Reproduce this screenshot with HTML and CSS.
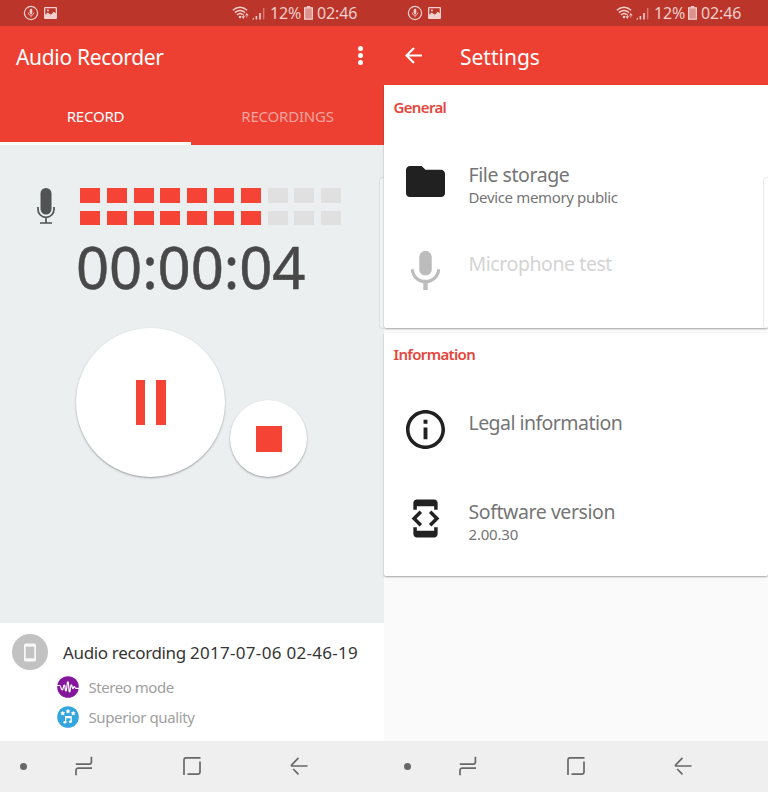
FILE: index.html
```
<!DOCTYPE html>
<html lang="en">

<head>
  <meta charset="UTF-8">
  <meta name="viewport" content="width=device-width, initial-scale=1.0">
  <title>Audio Recorder</title>
  <link rel="stylesheet" href="styles.css">
</head>

<body>
  <!-- shared icons -->
  <svg class="sprite">
    <symbol id="rec" viewBox="0 0 16 16">
      <circle cx="8" cy="8" r="6.6" fill="none" stroke="currentColor" stroke-width="1.2"/>
      <rect x="6.7" y="3.8" width="2.6" height="5.2" rx="1.3" fill="currentColor"/>
      <path d="M5.2 7.5a2.8 2.8 0 0 0 5.6 0M8 10.3v2" fill="none" stroke="currentColor" stroke-width=".8"/>
    </symbol>
    <symbol id="pic" viewBox="0 0 13 12">
      <path fill="currentColor" fill-rule="evenodd" d="M1 0h11a1 1 0 0 1 1 1v10a1 1 0 0 1-1 1H1a1 1 0 0 1-1-1V1a1 1 0 0 1 1-1zM1.3 1.3v6.5l2.5-2.3 3 2.2 3-3 1.9 1.6V1.3zM3 2.5h1.8v1.7H3z"/>
    </symbol>
    <symbol id="wifi" viewBox="0 0 17 14">
      <g fill="none" stroke="currentColor" stroke-width="1.4">
        <path d="M.8 4.2Q8 -1.8 15.2 4.2M2.9 6.6Q8 2.2 13.1 6.6M5 8.9Q8 6.4 10.6 8.6"/>
      </g>
      <circle cx="8" cy="11" r="1.3" fill="currentColor"/>
      <path d="M9.5 10.3h3.6L11.3 13zM11 8h.8v3H11zM13 9.4h3.6L14.8 7zM14.4 9h.8v2.5h-.8z" fill="currentColor"/>
    </symbol>
    <symbol id="signal" viewBox="0 0 13 13">
      <path d="M0 12.5l2-2v2zM3.6 9h1.6v3.5H3.6zM7.2 6h1.6v6.5H7.2z" fill="currentColor"/>
      <path d="M10.9 1h1.5v11.5h-1.5z" fill="currentColor" opacity=".45"/>
    </symbol>
    <symbol id="battery" viewBox="0 0 9 14">
      <path d="M2.8 0h3.4v1.5H2.8z" fill="currentColor"/>
      <rect x=".6" y="1.8" width="7.8" height="11.4" fill="currentColor" fill-opacity=".6" stroke="currentColor" stroke-width="1.2"/>
    </symbol>
    <symbol id="recents" viewBox="0 0 18 20">
      <path d="M.8 8.2h13.4q2.2 0 2.2-2.2V.8M17 12.2H3.2Q1 12.2 1 14.4v4.8" fill="none" stroke="currentColor" stroke-width="1.7"/>
    </symbol>
    <symbol id="home" viewBox="0 0 18 18">
      <path d="M1 18V3q0-2.2 2.2-2.2H17.5M17 4.5V15q0 2.2-2.2 2.2H4.5" fill="none" stroke="currentColor" stroke-width="1.7"/>
    </symbol>
    <symbol id="back" viewBox="0 0 18 18">
      <path d="M17.5 9H2.5Q.6 9 2 7.6L8.5.8M3.2 12l5.3 5.4" fill="none" stroke="currentColor" stroke-width="1.7"/>
    </symbol>
  </svg>

  <div class="phone">
    <div class="status">
      <svg class="s-rec"><use href="#rec"/></svg>
      <svg class="s-pic"><use href="#pic"/></svg>
      <div class="status-right">
        <svg class="s-wifi"><use href="#wifi"/></svg>
        <svg class="s-signal"><use href="#signal"/></svg>
        <span class="percent">12%</span>
        <svg class="s-battery"><use href="#battery"/></svg>
        <span class="clock">02:46</span>
      </div>
    </div>
    <header class="appbar">
      <h1 class="app-title">Audio Recorder</h1>
      <div class="menu"><i></i><i></i><i></i></div>
    </header>
    <nav class="tabs">
      <a class="tab active">RECORD</a>
      <a class="tab">RECORDINGS</a>
    </nav>

    <main class="recorder">
      <div class="level">
        <svg class="level-mic" viewBox="0 0 18 36">
          <rect x="3.5" y="0" width="11" height="26.5" rx="5.5" fill="#515253"/>
          <path d="M1 19v2.5a8 7.8 0 0 0 16 0V19M9 29v5.5M3 35h12" fill="none" stroke="#515253" stroke-width="1.7"/>
        </svg>
        <div class="meter">
          <b></b><b></b><b></b><b></b><b></b><b></b><b></b><b class="off"></b><b class="off"></b><b class="off"></b>
          <b></b><b></b><b></b><b></b><b></b><b></b><b></b><b class="off"></b><b class="off"></b><b class="off"></b>
        </div>
      </div>
      <div class="timer">00:00:04</div>
      <div class="controls">
        <button class="round pause"><i></i><i></i></button>
        <button class="round stop"><i></i></button>
      </div>
    </main>

    <section class="details">
      <svg class="device" viewBox="0 0 36 36">
        <circle cx="18" cy="18" r="18" fill="#c2c2c2"/>
        <rect x="12" y="9.5" width="12" height="18" rx="1.5" fill="#f8f8f8"/>
        <rect x="13.7" y="12.7" width="8.6" height="11.6" fill="#c2c2c2"/>
      </svg>
      <div class="details-text">
        <p class="name">Audio recording <span class="date">2017-07-06 02-46-19</span></p>
        <div class="option">
          <svg viewBox="0 0 22 22">
            <circle cx="11" cy="11" r="10.8" fill="#86169c"/>
            <path d="M0 9.5h2.5q1 0 1.3 1.5t1 2.6q.8.8 1.2-1l.8-3q.5-1 1 0l.7 5q.5 1 .9-.2l1-8q.5-1 1 0l.7 9q.4 1 .9 0l.9-6q.4-1 .9 0l.9 3q.6.5.9-1 .8-1.5 1.4 0 .5 1 1.4 1H22" fill="none" stroke="#fff" stroke-width="1.2"/>
          </svg>
          <span>Stereo mode</span>
        </div>
        <div class="option quality">
          <svg viewBox="0 0 22 22">
            <circle cx="11" cy="11" r="10.8" fill="#35a5df"/>
            <g fill="#fff">
              <path id="star" d="M11 2.8l.8 1.5 1.6.3-1.1 1.2.2 1.7-1.5-.7-1.5.7.2-1.7-1.1-1.2 1.6-.3z"/>
              <use href="#star" x="-5.2" y="2"/>
              <use href="#star" x="5.2" y="2"/>
              <path d="M8 10h6.8v5.5h-1.3v-3.3H9.3v4H8z"/>
              <ellipse cx="7.9" cy="16.2" rx="1.5" ry="1.2"/>
              <ellipse cx="13.4" cy="15.7" rx="1.5" ry="1.2"/>
            </g>
          </svg>
          <span>Superior quality</span>
        </div>
      </div>
    </section>

    <footer class="navbar">
      <i class="dot"></i>
      <svg class="n-recents"><use href="#recents"/></svg>
      <svg class="n-home"><use href="#home"/></svg>
      <svg class="n-back"><use href="#back"/></svg>
    </footer>
    <div class="edge"></div>
  </div>

  <div class="phone settings">
    <div class="status">
      <svg class="s-rec"><use href="#rec"/></svg>
      <svg class="s-pic"><use href="#pic"/></svg>
      <div class="status-right">
        <svg class="s-wifi"><use href="#wifi"/></svg>
        <svg class="s-signal"><use href="#signal"/></svg>
        <span class="percent">12%</span>
        <svg class="s-battery"><use href="#battery"/></svg>
        <span class="clock">02:46</span>
      </div>
    </div>
    <header class="appbar">
      <svg class="arrow" viewBox="0 0 17 17"><path d="M17 8.5H1.8M9 1L1.5 8.5 9 16" fill="none" stroke="#fff" stroke-width="2.1"/></svg>
      <h1>Settings</h1>
    </header>

    <main class="list">
      <section class="card">
        <h2>General</h2>
        <div class="row">
          <svg class="row-icon" viewBox="2 2 20 20"><path fill="#212121" d="M10 4H4c-1.100 0-2 .9-2 2v12c0 1.100.9 2 2 2h16c1.100 0 2-.9 2-2V8c0-1.100-.9-2-2-2h-8z"/></svg>
          <div>
            <h3>File storage</h3>
            <p>Device memory public</p>
          </div>
        </div>
        <div class="row disabled">
          <svg class="row-icon" viewBox="2 2 20 20"><path fill="#bcbcbc" d="M12 14.5c1.8 0 3.2-1.4 3.2-3.2V5.200C15.200 3.400 13.800 2 12 2S8.800 3.400 8.800 5.200v6.100c0 1.800 1.400 3.200 3.200 3.200zM17.900 11.300c0 3.200-2.800 5.500-5.900 5.500s-5.900-2.300-5.900-5.500H4.500c0 3.700 2.900 6.600 6.400 7.200V22h2.200v-3.500c3.500-.6 6.400-3.500 6.400-7.200z"/></svg>
          <div>
            <h3>Microphone test</h3>
          </div>
        </div>
      </section>
      <section class="card">
        <h2>Information</h2>
        <div class="row">
          <svg class="row-icon" viewBox="2 2 20 20"><path fill="#212121" d="M11 17h2v-6h-2v6zm1-15C6.500 2 2 6.500 2 12s4.500 10 10 10 10-4.500 10-10S17.500 2 12 2zm0 18.200c-4.500 0-8.200-3.700-8.200-8.200S7.500 3.800 12 3.800s8.200 3.700 8.200 8.200-3.700 8.200-8.200 8.200zM11 9h2V7h-2v2z"/></svg>
          <div>
            <h3 class="legal">Legal information</h3>
          </div>
        </div>
        <div class="row">
          <svg class="row-icon" viewBox="1.6 1.6 20.8 20.8"><path fill="#212121" d="M7 5h10v2h2V3c0-1.100-.9-2-2-2L7 1.010C5.900 1.010 5 1.900 5 3v4h2V5zm8.410 11.590L20 12l-4.590-4.590L14 8.830 17.170 12 14 15.170l1.410 1.420zM10 15.170L6.830 12 10 8.830 8.590 7.410 4 12l4.590 4.590L10 15.170zM17 19H7v-2H5v4c0 1.100.9 2 2 2h10c1.100 0 2-.9 2-2v-4h-2v2z" transform="translate(.9 .9) scale(.925)"/></svg>
          <div>
            <h3>Software version</h3>
            <p class="version">2.00.30</p>
          </div>
        </div>
      </section>
    </main>

    <footer class="navbar">
      <i class="dot"></i>
      <svg class="n-recents"><use href="#recents"/></svg>
      <svg class="n-home"><use href="#home"/></svg>
      <svg class="n-back"><use href="#back"/></svg>
    </footer>
    <div class="edge"></div>
  </div>
</body>

</html>
```
FILE: styles.css
```
* {
	margin: 0;
	padding: 0;
	box-sizing: border-box;
}

body {
	width: 768px;
	height: 792px;
	display: flex;
	font-family: "Noto Sans", sans-serif;
	color: #757575;
}

svg {
	display: block;
	flex: none;
}

h1, h3 {
	font-weight: 400;
}

h1, h2, h3, p, span {
	white-space: nowrap;
}

.sprite {
	display: none;
}

.phone {
	width: 384px;
	height: 792px;
	display: flex;
	flex-direction: column;
	position: relative;
	background: #ebeff0;
}

/* status bar */
.status {
	height: 26px;
	background: #bb352a;
	color: #f1cfcc;
	display: flex;
	align-items: center;
	padding: 0 27px 0 23px;
}

.s-rec {
	width: 16px;
	height: 16px;
}

.s-pic {
	width: 13px;
	height: 12px;
	margin-left: 5px;
}

.status-right {
	display: flex;
	align-items: center;
	margin-left: auto;
	font-size: 16px;
	line-height: 26px;
}

.s-wifi {
	width: 17px;
	height: 14px;
	margin-right: 3px;
}

.s-signal {
	width: 13px;
	height: 13px;
	margin: 0 5px 0 0;
}

.percent {
	width: 31px;
	letter-spacing: -0.2px;
}

.s-battery {
	width: 9px;
	height: 14px;
	margin: 0 4px 0 3px;
}

.clock {
	width: 40px;
	letter-spacing: -0.1px;
}

/* app bar */
.appbar {
	height: 59px;
	background: #ed4033;
	display: flex;
	align-items: center;
	padding: 2px 21px 0 16px;
	color: #fff;
}

.appbar h1 {
	font-size: 21px;
}

.appbar .app-title {
	letter-spacing: -0.33px;
}

.menu {
	margin: -2px 0 0 auto;
	display: flex;
	flex-direction: column;
	gap: 2px;
}

.menu i {
	width: 5px;
	height: 5px;
	border-radius: 50%;
	background: #fff;
}

.tabs {
	height: 60px;
	display: flex;
	background: #ed4033;
}

.tab {
	width: 193px;
	text-align: center;
	font-size: 15px;
	line-height: 62px;
	letter-spacing: -0.2px;
	color: #f6a49d;
}

.tab.active {
	width: 191px;
	color: #fff;
	border-bottom: 3px solid #fff;
}

/* recorder */
.recorder {
	height: 478px;
	padding-top: 43px;
}

.level {
	display: flex;
	padding-left: 37px;
}

.level-mic {
	width: 18px;
	height: 36px;
	margin-right: 25px;
}

.meter {
	display: grid;
	grid-template-columns: repeat(10, 20px);
	grid-auto-rows: 14.5px;
	gap: 8.3px 6.8px;
}

.meter b {
	background: #f54336;
}

.meter .off {
	background: #e0e0e0;
}

.timer {
	font-size: 58px;
	line-height: 80px;
	height: 101px;
	padding: 2px 0 0 76px;
	color: #484848;
	letter-spacing: -0.1px;
	-webkit-text-stroke: 0.5px #484848;
}

.controls {
	display: flex;
	align-items: flex-end;
	gap: 5px;
	padding: 2px 0 0 76px;
}

.round {
	border: 0;
	border-radius: 50%;
	background: #fff;
	box-shadow: 0 1px 2px rgba(0, 0, 0, .35);
	display: flex;
	align-items: center;
	justify-content: center;
}

.pause {
	width: 149px;
	height: 149px;
	gap: 11px;
}

.pause i {
	width: 9.5px;
	height: 45px;
	background: #f54336;
}

.stop {
	width: 77px;
	height: 77px;
}

.stop i {
	width: 26px;
	height: 26px;
	background: #f54336;
}

/* recording details */
.details {
	height: 118px;
	background: #fff;
	display: flex;
	padding: 11px 0 0 12px;
}

.device {
	width: 36px;
	height: 36px;
}

.details-text {
	padding: 4px 0 0 8.5px;
}

.name {
	font-size: 17px;
	line-height: 30px;
	padding-left: 6.5px;
	margin-bottom: 4px;
	letter-spacing: -0.35px;
	color: #353535;
}

.date {
	letter-spacing: 0.3px;
}

.option {
	display: flex;
	align-items: center;
	height: 30px;
	font-size: 15px;
	letter-spacing: -0.45px;
	color: #a0a0a0;
}

.option svg {
	width: 22px;
	height: 22px;
	margin-right: 10px;
}

.quality {
	letter-spacing: -0.38px;
}

/* navigation bar */
.navbar {
	height: 51px;
	background: #efefef;
	color: #686868;
	display: flex;
	align-items: center;
	padding: 0 0 1px 20px;
}

.dot {
	width: 7px;
	height: 7px;
	border-radius: 50%;
	background: #686868;
}

.n-recents {
	width: 18px;
	height: 20px;
	margin-left: 48px;
}

.n-home {
	width: 18px;
	height: 18px;
	margin-left: 89.5px;
}

.n-back {
	width: 18px;
	height: 18px;
	margin-left: 89.5px;
}

/* edge panel handle lies over the screen */
.edge {
	position: absolute;
	right: 0;
	top: 177px;
	width: 5px;
	height: 152px;
	border: 1px solid rgba(0, 0, 0, .08);
	border-right: 0;
	border-radius: 4px 0 0 4px;
	background: rgba(255, 255, 255, .3);
}

/* settings */
.settings {
	background: #fafafa;
}

.settings .appbar {
	padding-left: 20.5px;
}

.arrow {
	width: 17px;
	height: 17px;
	margin: -3px 38.5px 0 0;
}

.list {
	flex: 1;
	display: flex;
	flex-direction: column;
	gap: 5px;
}

.card {
	height: 243px;
	background: #fff;
	border-radius: 0 0 2px 2px;
	box-shadow: 0 1px 2px rgba(0, 0, 0, .35);
}

.card h2 {
	font-size: 15px;
	font-weight: 600;
	line-height: 20px;
	letter-spacing: -0.65px;
	padding: 12px 0 0 9.5px;
	height: 53px;
	color: #e5453b;
}

.card + .card h2 {
	padding-top: 11px;
}

.row {
	height: 89px;
	display: flex;
	padding: 24px 0 0 22px;
}

.row-icon {
	width: 39px;
	height: 39px;
	margin-right: 23.5px;
}

.row h3 {
	font-size: 19.5px;
	line-height: 25px;
	letter-spacing: -0.43px;
}

.row .legal {
	letter-spacing: -0.55px;
}

.row p {
	font-size: 15px;
	line-height: 20px;
	letter-spacing: -0.35px;
}

.row .version {
	letter-spacing: -0.2px;
}

.disabled h3 {
	color: #d4d4d4;
}
```
